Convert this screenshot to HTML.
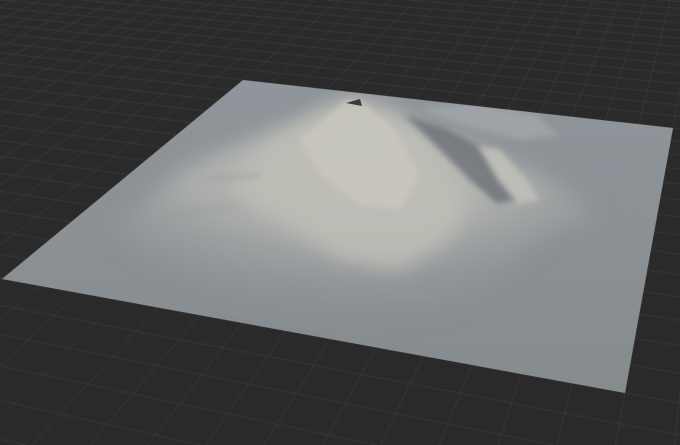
<!DOCTYPE html>
<html><head><meta charset="utf-8"><style>
html,body{margin:0;padding:0;background:#2a2a2b;overflow:hidden}
canvas,svg{position:absolute;left:0;top:0}
</style></head><body>
<canvas id="c" width="680" height="445"></canvas>
<svg width="680" height="445" viewBox="0 0 680 445">
<defs>
<clipPath id="cl"><polygon points="243,80 673,128 625,393 2,279"/></clipPath>
<radialGradient id="m" cx="0.5" cy="0.2" r="0.75">
<stop offset="0" stop-color="#c2c2bc"/>
<stop offset="0.5" stop-color="#abadab"/>
<stop offset="1" stop-color="#8d9296" stop-opacity="0"/>
</radialGradient>
<linearGradient id="p" x1="0" y1="0" x2="0" y2="1">
<stop offset="0" stop-color="#8f959a"/><stop offset="1" stop-color="#868b8e"/>
</linearGradient>
<filter id="b"><feGaussianBlur stdDeviation="10"/></filter>
<filter id="b2"><feGaussianBlur stdDeviation="3"/></filter>
</defs>
<polygon points="243,80 673,128 625,393 2,279" fill="url(#p)"/>
<g clip-path="url(#cl)">
<path d="M350,100 L420,125 L480,150 L560,185 L600,215 L540,240 L480,290 L430,335 L330,320 L240,300 L150,260 L110,230 L180,170 L260,135 Z" fill="url(#m)" filter="url(#b)"/>
<path d="M350,100 L390,110 L430,150 L470,200 L450,240 L400,270 L340,260 L280,220 L230,190 L270,150 L310,120 Z" fill="#bebdb6" filter="url(#b)" opacity="0.9"/>
<path d="M345,101 L365,104 L395,130 L420,175 L400,210 L360,205 L320,175 L300,140 Z" fill="#c9c7bf" filter="url(#b2)" opacity="0.8"/>
<path d="M405,115 L445,128 L478,146 L505,170 L520,198 L498,204 L470,180 L440,150 Z" fill="#6f747a" filter="url(#b2)" opacity="0.85"/>
<path d="M478,146 L500,150 L525,178 L540,200 L518,204 L498,180 Z" fill="#bdbcb6" filter="url(#b2)"/>
<path d="M420,108 L480,104 L535,115 L560,135 L520,140 L470,128 Z" fill="#9ea3a7" filter="url(#b2)"/>
<path d="M200,180 L260,175 M170,215 L240,205 M300,260 L360,270 M380,290 L440,300 M220,240 L280,250" stroke="#999c9c" stroke-width="2" filter="url(#b2)"/>
</g>
<path d="M346,103 L360,99 L362,106 Z" fill="#3a3a3a"/>
</svg>
<script>
var c=document.getElementById('c').getContext('2d');
var X=[243,673,625,2],Y=[80,128,393,279];
var dx1=X[1]-X[2],dx2=X[3]-X[2],sx=X[0]-X[1]+X[2]-X[3];
var dy1=Y[1]-Y[2],dy2=Y[3]-Y[2],sy=Y[0]-Y[1]+Y[2]-Y[3];
var den=dx1*dy2-dx2*dy1;
var g=(sx*dy2-dx2*sy)/den,h=(dx1*sy-sx*dy1)/den;
var a=X[1]-X[0]+g*X[1],b=X[3]-X[0]+h*X[3],cc=X[0];
var d=Y[1]-Y[0]+g*Y[1],e=Y[3]-Y[0]+h*Y[3],f=Y[0];
function P(u,v){var w=g*u+h*v+1;return [(a*u+b*v+cc)/w,(d*u+e*v+f)/w,w];}
c.strokeStyle='#3a3a3c';c.lineWidth=1;
var N=14;
function seg(fn){c.beginPath();var st=false;for(var t=-4;t<=5;t+=0.02){var p=fn(t);if(p[2]<=0.05){st=false;continue;}if(!st){c.moveTo(p[0],p[1]);st=true;}else c.lineTo(p[0],p[1]);}c.stroke();}
for(var i=-4*N;i<=5*N;i++){var k=i/N;seg(function(t){return P(k,t)});seg(function(t){return P(t,k)});}
</script>
</body></html>
